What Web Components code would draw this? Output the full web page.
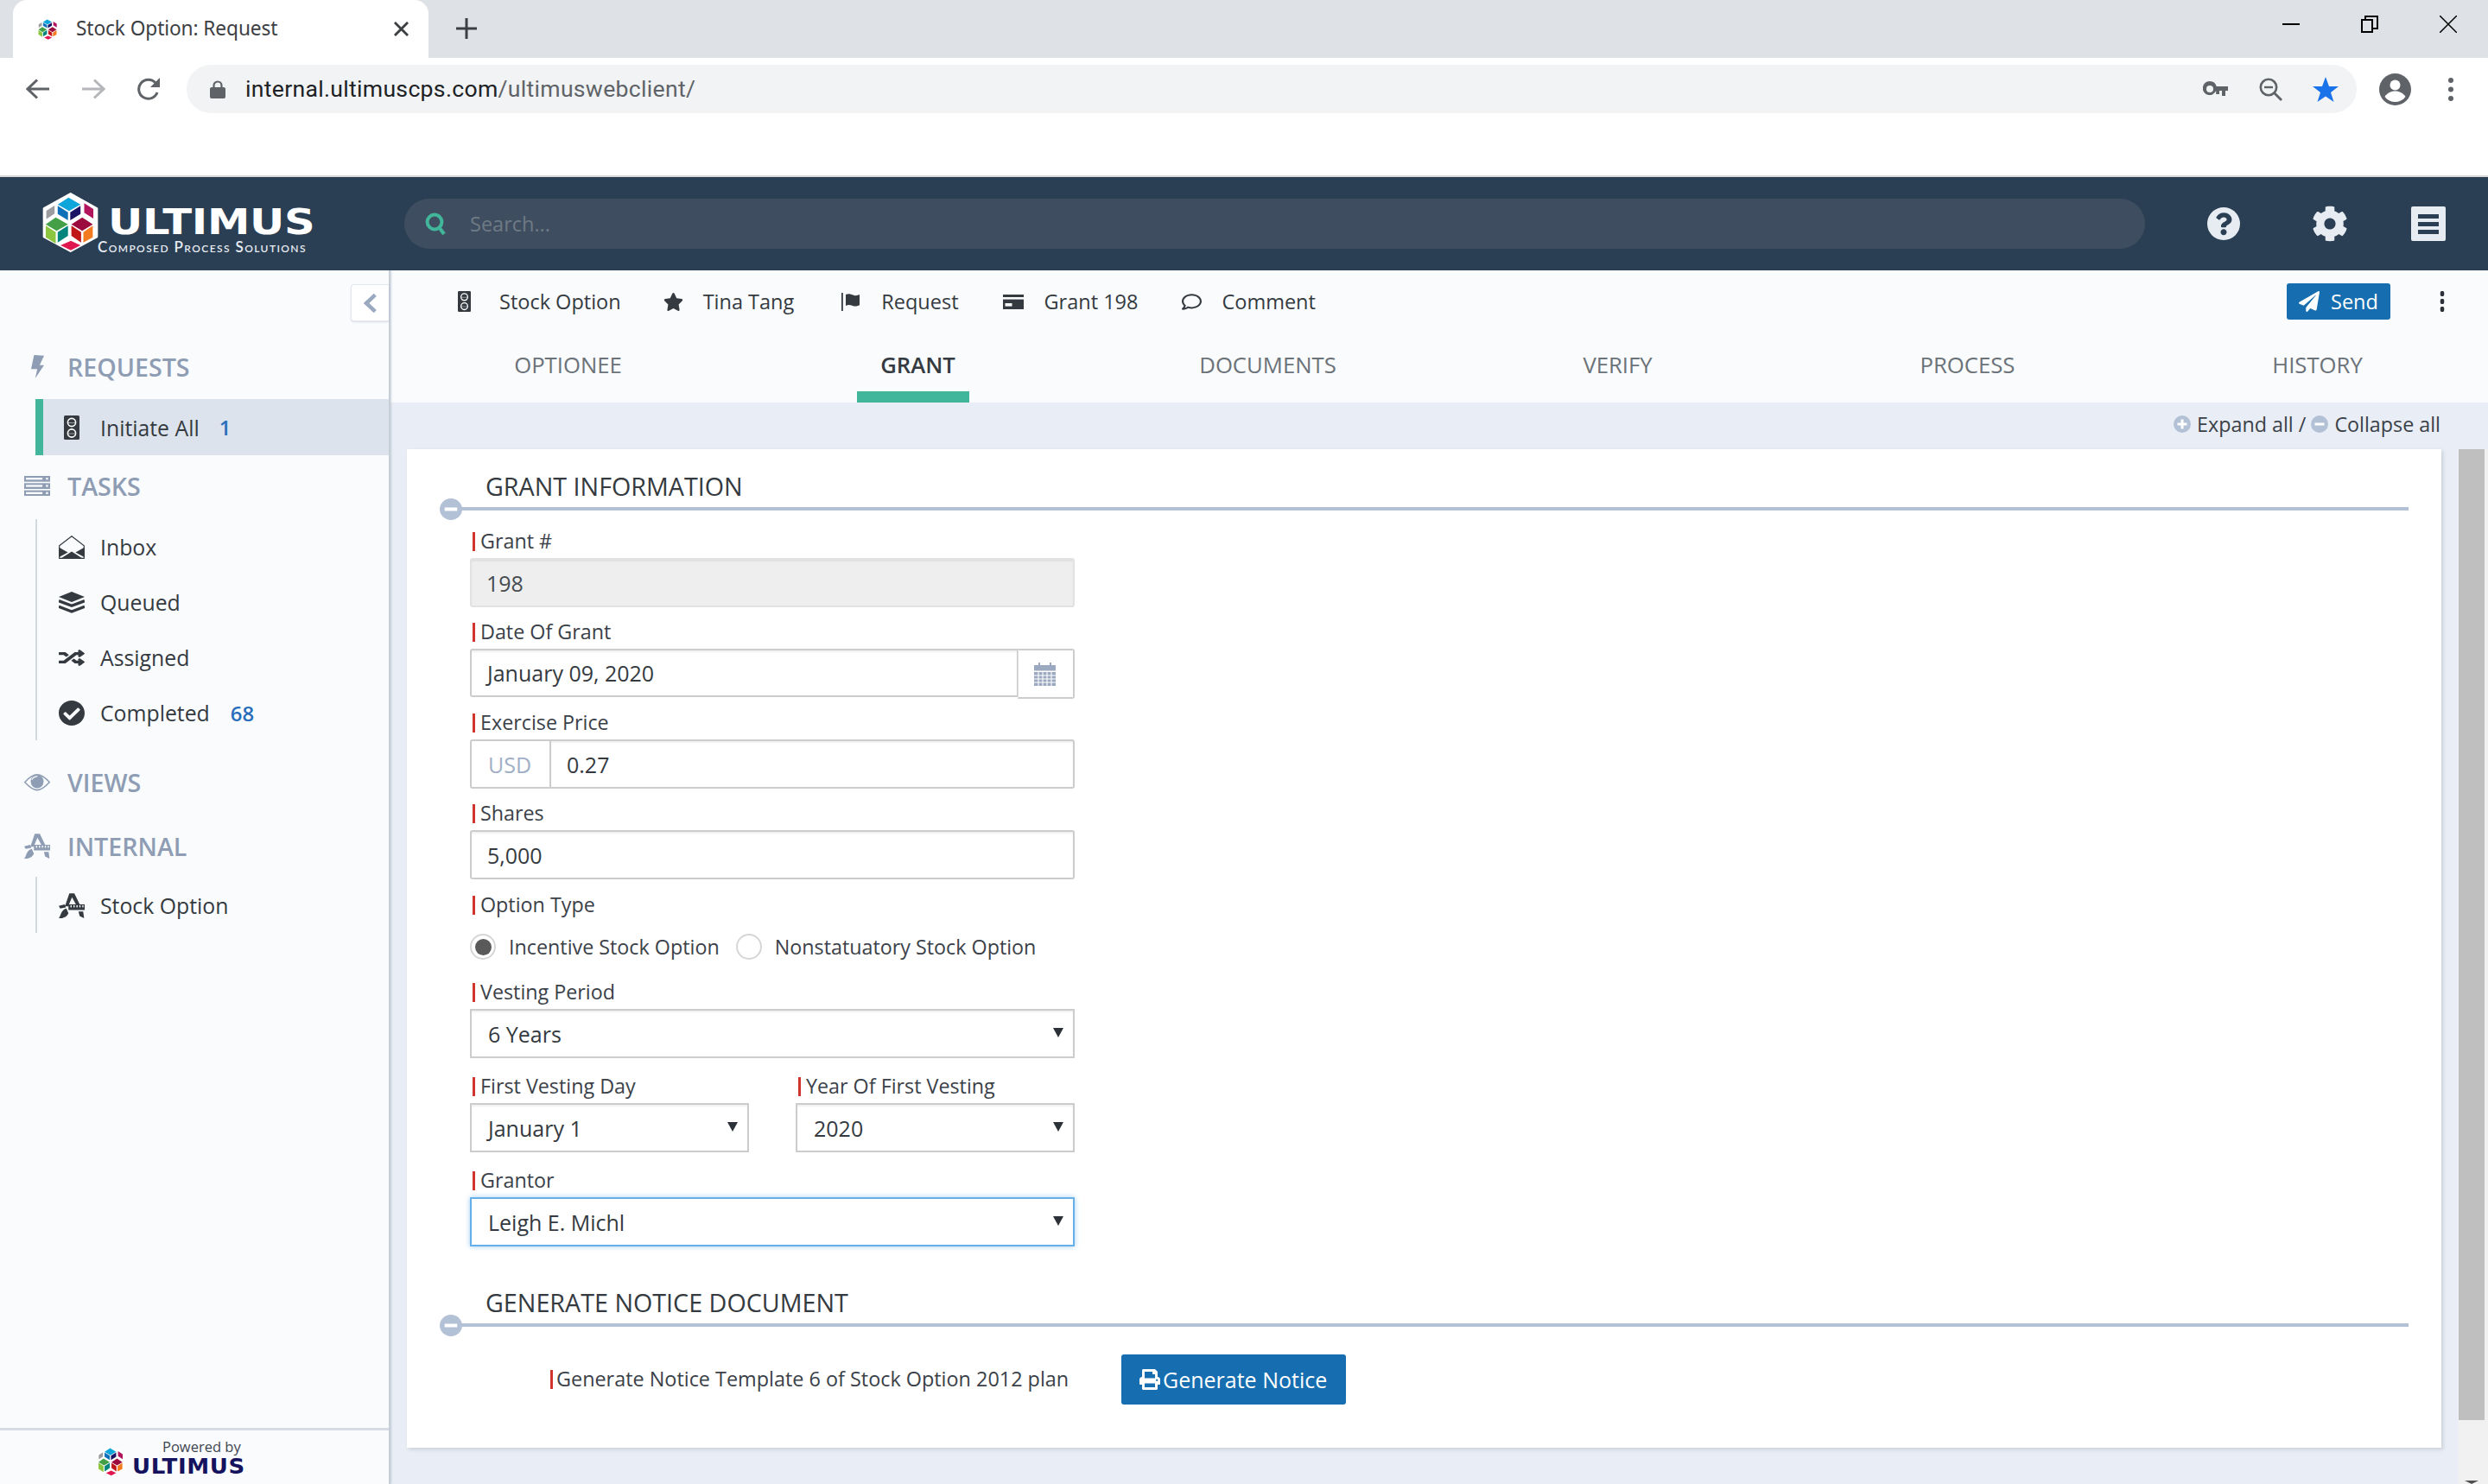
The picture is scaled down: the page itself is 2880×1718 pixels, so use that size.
<!DOCTYPE html>
<html lang="en">
<head>
<meta charset="utf-8">
<title>Stock Option: Request</title>
<style>
html,body{margin:0;padding:0;width:2880px;height:1718px;overflow:hidden;background:#fff}
body{font-family:"Open Sans","Noto Sans",sans-serif;font-size:25px;color:#343a40}
</style>
</head>
<body>
<app-root></app-root>
<script>
const ICONS={
 traffic:['0 0 18 28','<rect width="18" height="28" rx="1.5" fill="currentColor"/><circle cx="9" cy="8" r="4.6" fill="none" stroke="#fff" stroke-width="1.6"/><circle cx="9" cy="20.5" r="4.6" fill="none" stroke="#fff" stroke-width="1.6"/><path d="M5 8.5h8M5 21h8" stroke="#fff" stroke-width="1" opacity=".5"/>'],
 bolt:['108 310 44 80','<polygon fill="currentColor" points="118,310 152,312 137,345 152,345 122,390 129,358 108,358"/>'],
 server:['86 723 88 69','<g fill="currentColor"><rect x="86" y="723" width="88" height="20"/><rect x="86" y="748" width="88" height="20"/><rect x="86" y="773" width="88" height="19"/></g><g fill="#f9fbfd"><rect x="92" y="729" width="56" height="7"/><rect x="92" y="754" width="56" height="7"/><rect x="92" y="779" width="56" height="7"/><rect x="160" y="729" width="7" height="7"/><rect x="160" y="754" width="7" height="7"/><rect x="160" y="779" width="7" height="7"/></g>'],
 inbox:['205 932 88 80','<path d="M207 967 249 934 291 967V1010H207Z" fill="none" stroke="currentColor" stroke-width="3.4"/><path fill="currentColor" d="M205 972 236 990 205 1007ZM293 972 262 990 293 1007ZM210 1012 249 987 288 1012Z"/>'],
 layers:['205 1125 88 75','<path fill="currentColor" d="M249 1125 293 1143 249 1161 205 1143Z"/><path fill="none" stroke="currentColor" stroke-width="10" d="M205 1157 249 1174 293 1157M205 1177 249 1194 293 1177"/>'],
 random:['0 0 512 512','<path fill="currentColor" d="M504.971 359.029c9.373 9.373 9.373 24.569 0 33.941l-80 79.984c-15.01 15.01-40.971 4.49-40.971-16.971V416h-58.785a12.004 12.004 0 0 1-8.773-3.812l-70.556-75.596 53.333-57.143L352 336h32v-39.981c0-21.438 25.943-31.998 40.971-16.971l80 79.981zM12 176h84l52.781 56.551 53.333-57.143-70.556-75.596A11.999 11.999 0 0 0 122.785 96H12c-6.627 0-12 5.373-12 12v56c0 6.627 5.373 12 12 12zm372 0v39.984c0 21.46 25.961 31.98 40.971 16.971l80-79.984c9.373-9.373 9.373-24.569 0-33.941l-80-79.981C409.943 24.021 384 34.582 384 56.019V96h-58.785a12.004 12.004 0 0 0-8.773 3.812L96 336H12c-6.627 0-12 5.373-12 12v56c0 6.627 5.373 12 12 12h110.785c3.326 0 6.503-1.381 8.773-3.812L352 176h32z"/>'],
 check:['8 8 496 496','<path fill="currentColor" d="M504 256c0 136.967-111.033 248-248 248S8 392.967 8 256 119.033 8 256 8s248 111.033 248 248zM227.314 387.314l184-184c6.248-6.248 6.248-16.379 0-22.627l-22.627-22.627c-6.248-6.249-16.379-6.249-22.628 0L216 308.118l-70.059-70.059c-6.248-6.248-16.379-6.248-22.628 0l-22.627 22.627c-6.248 6.248-6.248 16.379 0 22.627l104 104c6.249 6.249 16.379 6.249 22.628.001z"/>'],
 eye:['86 290 88 60','<path d="M88 320C105 302 118 295 130 295S155 302 172 320C155 338 142 346 130 346S105 338 88 320Z" fill="none" stroke="currentColor" stroke-width="4.5"/><circle cx="130" cy="318" r="22" fill="currentColor"/><path d="M112 312C116 304 124 301 131 301" stroke="#f9fbfd" stroke-width="3" fill="none"/>'],
 design:['205 700 88 85','<path fill="currentColor" d="M241 701H258L283 752H271L250 714 237 745H226ZM238 738H293V757H238ZM205 743 225 738 229 748 210 752ZM231 752 238 768C232 782 218 786 205 785 213 776 212 757 231 752ZM272 762H288L291 785 276 778Z"/><g fill="#f9fbfd"><rect x="245" y="741" width="4" height="7"/><rect x="255" y="741" width="4" height="7"/><rect x="265" y="741" width="4" height="7"/><rect x="275" y="741" width="4" height="7"/><rect x="285" y="741" width="4" height="7"/></g>'],
 chevron:['1265 88 44 64','<path d="M1304 92 1274 120 1304 148" fill="none" stroke="currentColor" stroke-width="13"/>'],
 star:['0 0 576 512','<path fill="currentColor" d="M259.3 17.8L194 150.2 47.9 171.5c-26.2 3.8-36.7 36.1-17.7 54.6l105.7 103-25 145.5c-4.5 26.3 23.2 46 46.4 33.7L288 439.6l130.7 68.7c23.2 12.2 50.9-7.4 46.4-33.7l-25-145.5 105.7-103c19-18.5 8.5-50.8-17.7-54.6L382 150.2 316.7 17.8c-11.7-23.6-45.6-23.9-57.4 0z"/>'],
 flag:['0 0 21 21','<rect width="1.8" height="21" fill="currentColor"/><path fill="currentColor" d="M5 2C9 0 12 2 15 3c2 .5 4 0 6-1v12c-2 1.5-5 2-8 1s-5-1.5-8 0Z"/>'],
 card:['0 0 24 17','<rect width="24" height="17" fill="currentColor"/><rect y="3" width="24" height="2.6" fill="#f9fbfd"/><rect x="2.5" y="10" width="8" height="3.6" fill="#f9fbfd"/>'],
 comment:['0 0 512 512','<path fill="currentColor" d="M256 32C114.6 32 0 125.1 0 240c0 47.6 19.9 91.2 52.9 126.3C38 405.7 7 439.1 6.5 439.5c-6.6 7-8.4 17.2-4.6 26S14.4 480 24 480c61.5 0 110-25.7 139.1-46.3C192 442.8 223.2 448 256 448c141.4 0 256-93.1 256-208S397.4 32 256 32zm0 368c-26.7 0-53.1-4.1-78.4-12.1l-22.7-7.2-19.5 13.8c-14.3 10.1-33.9 21.4-57.5 29 7.3-12.1 14.4-25.7 19.9-40.2l10.6-28.1-20.6-21.8C69.7 314.1 48 282.2 48 240c0-88.2 93.3-160 208-160s208 71.8 208 160-93.3 160-208 160z"/>'],
 plane:['0 0 512 512','<path fill="currentColor" d="M476 3.2L12.5 270.6c-18.1 10.4-15.8 35.6 2.2 43.2L121 358.4l287.3-253.2c5.5-4.9 13.3 2.6 8.6 8.3L176 407v80.5c0 23.6 28.5 32.9 42.5 15.8L282 426l124.6 52.2c14.2 6 30.4-2.9 33-18.2l72-432C515 7.8 493.3-6.8 476 3.2z"/>'],
 kebab:['0 0 8 24','<rect x="1" y="0" width="6" height="6" rx="2" fill="currentColor"/><rect x="1" y="9" width="6" height="6" rx="2" fill="currentColor"/><rect x="1" y="18" width="6" height="6" rx="2" fill="currentColor"/>'],
 cog:['0 0 512 512','<path fill="currentColor" d="M487.4 315.7l-42.6-24.6c4.3-23.2 4.3-47 0-70.2l42.6-24.6c4.9-2.8 7.1-8.6 5.5-14-11.1-35.6-30-67.8-54.7-94.6-3.8-4.1-10-5.1-14.8-2.3L380.8 110c-17.9-15.4-38.5-27.3-60.8-35.1V25.8c0-5.6-3.9-10.5-9.4-11.7-36.7-8.2-74.3-7.8-109.2 0-5.5 1.2-9.4 6.1-9.4 11.7V75c-22.2 7.9-42.8 19.8-60.8 35.1L88.7 85.5c-4.9-2.8-11-1.9-14.8 2.3-24.7 26.7-43.6 58.9-54.7 94.6-1.7 5.4.6 11.2 5.5 14L67.3 221c-4.3 23.2-4.3 47 0 70.2l-42.6 24.6c-4.9 2.8-7.1 8.6-5.5 14 11.1 35.6 30 67.8 54.7 94.6 3.8 4.1 10 5.1 14.8 2.3l42.6-24.6c17.9 15.4 38.5 27.3 60.8 35.1v49.2c0 5.6 3.9 10.5 9.4 11.7 36.7 8.2 74.3 7.8 109.2 0 5.5-1.2 9.4-6.1 9.4-11.7v-49.2c22.2-7.9 42.8-19.8 60.8-35.1l42.6 24.6c4.9 2.8 11 1.9 14.8-2.3 24.7-26.7 43.6-58.9 54.7-94.6 1.5-5.5-.7-11.3-5.6-14.1zM256 336c-44.1 0-80-35.9-80-80s35.9-80 80-80 80 35.9 80 80-35.9 80-80 80z"/>'],
 help:['8 8 496 496','<path fill="currentColor" d="M504 256c0 136.997-111.043 248-248 248S8 392.997 8 256C8 119.083 119.043 8 256 8s248 111.083 248 248zM262.655 90c-54.497 0-89.255 22.957-116.549 63.758-3.536 5.286-2.353 12.415 2.715 16.258l34.699 26.31c5.205 3.947 12.621 3.008 16.665-2.122 17.864-22.658 30.113-35.797 57.303-35.797 20.429 0 45.698 13.148 45.698 32.958 0 14.976-12.363 22.667-32.534 33.976C247.128 238.528 216 254.941 216 296v4c0 6.627 5.373 12 12 12h56c6.627 0 12-5.373 12-12v-1.333c0-28.462 83.186-29.647 83.186-106.667 0-58.002-60.165-102-116.531-102zM256 338c-25.365 0-46 20.635-46 46 0 25.364 20.635 46 46 46s46-20.636 46-46c0-25.365-20.635-46-46-46z"/>'],
 menu:['0 0 40 40','<rect width="40" height="40" rx="2" fill="currentColor"/><rect x="8" y="9" width="24" height="5" fill="#2b3f54"/><rect x="8" y="18" width="24" height="5" fill="#2b3f54"/><rect x="8" y="27" width="24" height="5" fill="#2b3f54"/>'],
 search:['0 0 24 26','<circle cx="11" cy="11" r="8.4" fill="none" stroke="currentColor" stroke-width="4"/><path d="M16.5 17.5 22 25" stroke="currentColor" stroke-width="4.2"/>'],
 calendar:['0 0 25 27','<g fill="currentColor"><rect y="3" width="25" height="6.5"/><rect x="5" y="0" width="2" height="4"/><rect x="18" y="0" width="2" height="4"/><rect y="11" width="25" height="16"/></g><g stroke="#fff" stroke-width="1.1"><path d="M5 11v16M10 11v16M15 11v16M20 11v16M0 15h25M0 19h25M0 23h25"/></g>'],
 print:['0 0 512 512','<path fill="currentColor" d="M448 192V77.25c0-8.49-3.37-16.62-9.37-22.63L393.37 9.37c-6-6-14.14-9.37-22.63-9.37H96C78.33 0 64 14.33 64 32v160c-35.35 0-64 28.65-64 64v112c0 8.84 7.16 16 16 16h48v96c0 17.67 14.33 32 32 32h320c17.67 0 32-14.33 32-32v-96h48c8.84 0 16-7.16 16-16V256c0-35.35-28.65-64-64-64zm-64 256H128v-96h256v96zm0-224H128V64h192v48c0 8.84 7.16 16 16 16h48v96zm48 72c-13.25 0-24-10.75-24-24 0-13.26 10.75-24 24-24s24 10.74 24 24c0 13.25-10.75 24-24 24z"/>'],
 back:['0 0 27 24','<path d="M27 12H3M13 1.5 2 12l11 10.5" fill="none" stroke="currentColor" stroke-width="3"/>'],
 forward:['0 0 27 24','<path d="M0 12h24M14 1.5 25 12 14 22.5" fill="none" stroke="currentColor" stroke-width="3"/>'],
 reload:['0 0 27 26','<path d="M23 17a11 11 0 1 1-2-11" fill="none" stroke="currentColor" stroke-width="3"/><polygon points="26,0 26,11 15,11" fill="currentColor"/>'],
 lock:['0 0 18 21','<path d="M4.5 9V6a4.5 4.5 0 0 1 9 0v3" fill="none" stroke="currentColor" stroke-width="2.2"/><rect y="8" width="18" height="13" rx="2" fill="currentColor"/>'],
 key:['0 0 29 18','<path fill="currentColor" fill-rule="evenodd" d="M8 0a8 8 0 0 1 7.7 6H29v5h-3v6h-4v-6h-3v4h-3.8V11A8 8 0 1 1 8 0Zm0 5a4 4 0 1 0 0 8 4 4 0 0 0 0-8Z"/>'],
 zoomout:['0 0 27 27','<circle cx="11" cy="11" r="9.2" fill="none" stroke="currentColor" stroke-width="2.6"/><path d="M17.5 17.5 26 26" stroke="currentColor" stroke-width="2.8"/><path d="M6 11h10" stroke="currentColor" stroke-width="2.4"/>'],
 bookmark:['0 0 30 29','<polygon fill="currentColor" points="15,0 19,11 30,11 21,18 24.5,29 15,22.5 5.5,29 9,18 0,11 11,11"/>'],
 profile:['0 0 37 37','<circle cx="18.5" cy="18.5" r="18.5" fill="currentColor"/><circle cx="18.5" cy="13.5" r="6" fill="#fff"/><path fill="#fff" d="M6.5 27c3-5 8-6.5 12-6.5s9 1.500 12 6.500c-3 4-7.500 6-12 6s-9-2-12-6Z"/>'],
 vdots:['0 0 6 27','<circle cx="3" cy="3" r="3" fill="currentColor"/><circle cx="3" cy="13.500" r="3" fill="currentColor"/><circle cx="3" cy="24" r="3" fill="currentColor"/>'],
 close:['0 0 18 18','<path d="M1 1 17 17M17 1 1 17" stroke="currentColor" stroke-width="3"/>'],
 plus:['0 0 24 24','<path d="M12 0v24M0 12h24" stroke="currentColor" stroke-width="3"/>'],
 winclose:['0 0 20 20','<path d="M0 0 20 20M20 0 0 20" stroke="currentColor" stroke-width="1.500"/>'],
 winmin:['0 0 20 2','<rect width="20" height="2" fill="currentColor"/>'],
 winmax:['0 0 20 20','<path d="M1 5h12v14H1ZM5 5V1h14v14h-6" fill="none" stroke="currentColor" stroke-width="2"/>'],
 minus:['0 0 25 25','<circle cx="12.500" cy="12.500" r="12.500" fill="currentColor"/><rect x="5.500" y="10.500" width="14" height="4" fill="#fff"/>'],
 plusc:['0 0 20 20','<circle cx="10" cy="10" r="10" fill="currentColor"/><path d="M4.500 10h11M10 4.500v11" stroke="#fff" stroke-width="3"/>'],
 minusc:['0 0 20 20','<circle cx="10" cy="10" r="10" fill="currentColor"/><path d="M4.500 10h11" stroke="#fff" stroke-width="3"/>'],
 caret:['0 0 12 11','<polygon points="0,0 12,0 6,11" fill="currentColor"/>']
};
const CUBE=`<path fill="#fff" stroke="#fff" stroke-width="8" stroke-linejoin="round" d="M187 59 279 110V208L187 258 94 208V110Z"/>
<path fill="#0ea5db" d="M142 96 180 72 222 96 182 119Z"/><path fill="#0d6fb8" d="M142 101 178 123V151L142 129Z"/><path fill="#1b1464" d="M186 123 222 101V129L186 151Z"/>
<path fill="#9a9ca0" d="M102 118 131 100V128L102 147Z"/><path fill="#b0155e" d="M235 92 267 112V145L235 125Z"/>
<path fill="#43a047" d="M100 165 135 141 178 165 138 188Z"/><path fill="#8cc63f" d="M100 170 135 192V232L100 210Z"/><path fill="#00857c" d="M142 192 178 170V205L142 228Z"/>
<path fill="#9b0b3e" d="M190 165 228 141 265 165 228 188Z"/><path fill="#c01818" d="M190 170 224 192V228L190 205Z"/><path fill="#f47a1f" d="M232 192 265 170V210L232 228Z"/>
<path fill="#e0174f" d="M152 238 188 222 222 238 188 255Z"/>`;
function def(name,fn){customElements.define(name,class extends HTMLElement{
  connectedCallback(){if(this.shadowRoot)return;const r=this.attachShadow({mode:'open'});r.innerHTML=fn(this)}
})}
const a=(el,n,d='')=>el.getAttribute(n)??d;

def('x-icon',el=>{const [vb,body]=ICONS[a(el,'name')];return `<style>:host{display:inline-flex;flex:none;width:${a(el,'w','24')}px;height:${a(el,'h','24')}px;color:${a(el,'c','inherit')}}svg{display:block;width:100%;height:100%}</style><svg viewBox="${vb}" preserveAspectRatio="none" aria-hidden="true">${body}</svg>`});
def('ultimus-cube',el=>`<style>:host{display:block;flex:none;width:${a(el,'w')}px;height:${a(el,'h')}px}svg{display:block;width:100%;height:100%}</style><svg viewBox="88 52 197 213" preserveAspectRatio="none" aria-hidden="true">${CUBE}</svg>`);

def('browser-chrome',()=>`<style>
:host{display:block;height:205px;background:#fff;box-sizing:border-box;position:relative;font-family:"Noto Sans","Open Sans",sans-serif}
.strip{height:67px;background:#dee1e6;display:flex;align-items:center;color:#3c4043}
.tab{margin-left:15px;width:481px;height:67px;box-sizing:border-box;background:#fff;border-radius:16px 16px 0 0;display:flex;align-items:center;padding-left:28px}
.tab .t{margin-left:20px;flex:1;font-size:22.7px;color:#3c4043;letter-spacing:-.1px;white-space:nowrap;margin-top:-2px}
.tab x-icon{margin-right:23px}
.new{margin-left:32px;margin-top:-2px}
.win{margin-left:auto;display:flex;align-items:center;color:#000;margin-right:36px;height:46px;margin-top:-12px}
.win x-icon+x-icon{margin-left:71px}
.bar{display:flex;align-items:center;height:56px;margin-top:8px;color:#5f6368}
.bar>x-icon:nth-child(1){margin-left:30px}
.bar>x-icon:nth-child(2){margin-left:38px}
.bar>x-icon:nth-child(3){margin-left:37px}
.omni{margin-left:30px;width:2512px;height:56px;border-radius:28px;background:#f1f3f4;display:flex;align-items:center;box-sizing:border-box;padding-left:27px}
.url{margin-left:23px;font:26.6px/1 Roboto,sans-serif;color:#202124;letter-spacing:.3px}.url span{color:#5f6368}
.r{margin-left:auto;display:flex;align-items:center}
.line{position:absolute;left:0;right:0;bottom:0;height:2px;background:#d8d8d8}
</style>
<div class="strip"><div class="tab"><ultimus-cube w="25" h="27"></ultimus-cube><span class="t">Stock Option: Request</span><x-icon name="close" w="17" h="17"></x-icon></div>
<x-icon class="new" name="plus" w="24" h="24"></x-icon>
<div class="win"><x-icon name="winmin" w="20" h="2"></x-icon><x-icon name="winmax" w="20" h="20"></x-icon><x-icon name="winclose" w="20" h="20"></x-icon></div></div>
<div class="bar"><x-icon name="back" w="27" h="24"></x-icon><x-icon name="forward" w="27" h="24" c="#b4b6b9"></x-icon><x-icon name="reload" w="27" h="26"></x-icon>
<div class="omni"><x-icon name="lock" w="18" h="21"></x-icon><div class="url">internal.ultimuscps.com<span>/ultimuswebclient/</span></div>
<div class="r"><x-icon name="key" w="29" h="18"></x-icon><x-icon style="margin-left:36px" name="zoomout" w="27" h="27"></x-icon><x-icon style="margin-left:35px" name="bookmark" w="30" h="29" c="#1a73e8"></x-icon><span style="width:21px"></span></div></div>
<x-icon style="margin-left:26px" name="profile" w="37" h="37"></x-icon><x-icon style="margin-left:43px" name="vdots" w="6" h="27"></x-icon></div>
<div class="line"></div>`);

def('brand-logo',()=>`<style>
:host{display:flex;align-items:center;width:340px;margin-left:49px}
ultimus-cube{margin-top:-3px}
.w{margin-left:10px;display:flex;flex-direction:column;color:#fff;margin-top:16px}
.n{font:700 40px/31px "DejaVu Sans",sans-serif;display:block;transform:scaleX(1.24);transform-origin:left center;margin-left:1px;white-space:nowrap;letter-spacing:-.2px}
.s{font:600 17px/14px Lato,"Open Sans",sans-serif;font-variant:small-caps;letter-spacing:1.4px;margin-top:6px;margin-left:-11px;white-space:nowrap;color:#e6ecf2}
</style><ultimus-cube w="65" h="71"></ultimus-cube><div class="w"><span class="n">ULTIMUS</span><span class="s">Composed Process Solutions</span></div>`);

def('app-header',()=>`<style>
:host{display:flex;align-items:center;height:108px;background:#2b3f54}
.search{margin-left:79px;width:2015px;height:58px;border-radius:29px;background:#3e4d5f;display:flex;align-items:center;box-sizing:border-box;padding-left:24px}
.search span{margin-left:28px;color:#6f7a85;font-size:23.5px}
</style><brand-logo></brand-logo>
<div class="search"><x-icon name="search" w="24" h="26" c="#41b69b"></x-icon><span>Search...</span></div>
<x-icon style="margin-left:72px" name="help" w="38" h="38" c="#e6ecf2"></x-icon><x-icon style="margin-left:83px" name="cog" w="42" h="42" c="#e6ecf2"></x-icon><x-icon style="margin-left:73px" name="menu" w="40" h="40" c="#e6ecf2"></x-icon>`);

def('nav-head',el=>`<style>
:host{display:flex;align-items:center;height:50px;margin-top:${a(el,'mt','0')}px;color:#8e9db3;font-size:28.6px;font-weight:600}
.i{width:78px;flex:none;display:flex;box-sizing:border-box;padding-left:${a(el,'pl','28')}px}
</style><span class="i"><x-icon name="${a(el,'icon')}" w="${a(el,'w')}" h="${a(el,'h')}"></x-icon></span><slot></slot>`);

def('nav-item',el=>{const act=el.hasAttribute('active');return `<style>
:host{display:flex;align-items:center;height:${a(el,'ht','64')}px;box-sizing:border-box;color:#343a40;font-size:24.8px;${act?'background:#dce3ed;border-left:9px solid #41b69b;height:65px;':''}}
.i{width:${act?66:73}px;flex:none;display:flex;box-sizing:border-box;padding-left:${act?24:25}px}
.b{color:#2a6ebb;font-weight:600;font-size:23.9px;margin-left:${a(el,'bg','24')}px}
</style><span class="i"><x-icon name="${a(el,'icon')}" w="${a(el,'w')}" h="${a(el,'h')}"></x-icon></span><slot></slot>${a(el,'badge')?`<span class="b">${a(el,'badge')}</span>`:''}`});

def('nav-list',el=>`<style>:host{display:block;margin:${a(el,'mt','0')}px 0 0 41px;border-left:2px solid #d3d8dd}</style><slot></slot>`);

def('side-nav',()=>`<style>
:host{display:flex;flex-direction:column;flex:none;width:452px;box-sizing:border-box;background:#f9fbfd;border-right:2px solid #c6ced8;box-shadow:1px 0 2px rgba(90,110,140,.25);position:relative;z-index:2}
.top{display:flex;justify-content:flex-end;height:43px;margin-top:16px;margin-bottom:27px}
.col{width:44px;height:43px;box-sizing:border-box;background:#fff;border:1px solid #e4e8ee;border-right:0;border-radius:4px 0 0 4px;box-shadow:0 1px 2px rgba(90,110,140,.2);display:flex;align-items:center;justify-content:center;color:#9aa8c0}
.foot{margin-top:auto;height:65px;box-sizing:border-box;border-top:3px solid #d5dce5;display:flex;padding-left:112px;padding-top:17px;position:relative}
.pw{position:absolute;left:188px;top:8px;font-size:16.5px;line-height:22px;color:#3e4650}
.un{font:700 25px/26px "DejaVu Sans",sans-serif;color:#15125e;margin:12px 0 0 8px;letter-spacing:.6px;transform:scaleX(1.04);transform-origin:left center}
</style>
<div class="top"><div class="col"><x-icon name="chevron" w="15" h="22"></x-icon></div></div>
<nav-head icon="bolt" w="15" h="27" pl="36">REQUESTS</nav-head>
<nav-item style="margin:13px 0 0 41px" active icon="traffic" w="18" h="28" badge="1" bg="23">Initiate All</nav-item>
<nav-head mt="10" icon="server" w="30" h="23">TASKS</nav-head>
<nav-list mt="14"><nav-item icon="inbox" w="30" h="27">Inbox</nav-item><nav-item icon="layers" w="30" h="25">Queued</nav-item><nav-item icon="random" w="30" h="21">Assigned</nav-item><nav-item icon="check" w="30" h="29" badge="68">Completed</nav-item></nav-list>
<nav-head mt="23" icon="eye" w="30" h="21">VIEWS</nav-head>
<nav-head mt="24" icon="design" w="30" h="29">INTERNAL</nav-head>
<nav-list mt="11"><nav-item style="padding-top:1px" ht="65" icon="design" w="30" h="29">Stock Option</nav-item></nav-list>
<div class="foot"><ultimus-cube w="33" h="37"></ultimus-cube><span class="un">ULTIMUS</span><span class="pw">Powered by</span></div>`);

def('crumb-item',el=>`<style>:host{display:inline-flex;align-items:center;font-size:23.5px;color:#343a40}span{display:inline-flex;width:${a(el,'iw','48')}px;flex:none}</style><span><x-icon name="${a(el,'icon')}" w="${a(el,'w')}" h="${a(el,'h')}"></x-icon></span><slot></slot>`);

def('top-bar',()=>`<style>
:host{display:flex;align-items:center;height:79px;background:#f9fbfd;box-sizing:border-box;padding-bottom:7px}
.send{display:flex;align-items:center;margin-left:auto;width:120px;height:42px;box-sizing:border-box;padding-left:14px;border-radius:3px;background:#166eb0;color:#fff;font-size:23.5px}
.send span{margin-left:13px}
.k{margin:0 50px 0 57px;color:#2b3137}
</style>
<crumb-item style="margin-left:78px" icon="traffic" w="15" h="24" iw="48">Stock Option</crumb-item>
<crumb-item style="margin-left:49px" icon="star" w="23" h="21" iw="46">Tina Tang</crumb-item>
<crumb-item style="margin-left:55px" icon="flag" w="21" h="21" iw="46">Request</crumb-item>
<crumb-item style="margin-left:51px" icon="card" w="24" h="17" iw="48">Grant 198</crumb-item>
<crumb-item style="margin-left:51px" icon="comment" w="23" h="21" iw="46">Comment</crumb-item>
<div class="send"><x-icon name="plane" w="24" h="24"></x-icon><span>Send</span></div>
<x-icon class="k" name="kebab" w="6" h="24"></x-icon>`);

def('tab-bar',()=>`<style>
:host{display:grid;grid-template-columns:repeat(6,405px);height:74px;background:#f9fbfd;padding-left:3px;font-size:25.7px;font-weight:500;color:#6b7278}
div{display:flex;justify-content:center;align-items:flex-start;padding-top:13px;line-height:36px;position:relative}
.on{color:#343a40;font-weight:600}
.on::after{content:"";position:absolute;left:132px;top:61px;width:130px;height:13px;background:#41b69b}
</style><div>OPTIONEE</div><div class="on">GRANT</div><div>DOCUMENTS</div><div>VERIFY</div><div>PROCESS</div><div>HISTORY</div>`);

def('form-section',el=>`<style>
:host{display:block;margin-top:${a(el,'mt','0')}px}
.h{margin:0 38px 0 63px;font-size:28.7px;line-height:38px;padding-left:28px;color:#343a40;padding-bottom:5px;border-bottom:4px solid #b3c1d6;position:relative}
.h x-icon{position:absolute;left:-25px;bottom:-15px}
.b{margin-left:73px;width:700px}
</style><div class="h">${a(el,'title')}<x-icon name="minus" w="26" h="25" c="#b3c1d6"></x-icon></div><div class="b"><slot></slot></div><slot name="wide"></slot>`);

def('req-label',el=>`<style>:host{display:flex;align-items:center;height:22px;margin-left:3px;font-size:${a(el,'fs','23.3')}px;color:#3b4148;white-space:nowrap}i{width:3px;height:22px;background:#d0342c;margin-right:${a(el,'g','6')}px;flex:none}span{margin-top:-3px}</style><i></i><span><slot></slot></span>`);

def('text-box',el=>{const s=a(el,'kind','text');return `<style>
:host{display:flex;align-items:center;box-sizing:border-box;height:57px;margin-top:8px;border:2px solid #ccc;border-radius:3px;box-shadow:inset 0 2px 2px rgba(0,0,0,.06);background:${s==='readonly'?'#eee':'#fff'};padding-left:${a(el,'pl','18')}px;font-size:25px;color:#343a40;${s==='readonly'?'border-color:#e2e2e2;color:#454b51':''}}
</style><slot></slot>`});

def('date-box',()=>`<style>
:host{display:flex;margin-top:8px;height:58px}
.i{flex:1;display:flex;align-items:center;box-sizing:border-box;height:56px;border:2px solid #ccc;border-radius:3px 0 0 3px;border-right:1px solid #ccc;padding-left:18px;font-size:25px;box-shadow:inset 0 2px 2px rgba(0,0,0,.06)}
.b{width:66px;box-sizing:border-box;border:2px solid #ccc;border-left:1px solid #ddd;border-radius:0 3px 3px 0;display:flex;align-items:center;justify-content:center;color:#9aa8c0;padding-right:2px}
</style><div class="i"><slot></slot></div><div class="b"><x-icon name="calendar" w="25" h="27"></x-icon></div>`);

def('money-box',el=>`<style>
:host{display:flex;margin-top:8px;height:57px}
.u{width:92px;box-sizing:border-box;border:2px solid #ccc;border-right:0;border-radius:3px 0 0 3px;display:flex;align-items:center;justify-content:center;color:#9fafc6;font-size:25px;padding-right:2px}
.i{flex:1;display:flex;align-items:center;box-sizing:border-box;border:2px solid #ccc;border-radius:0 3px 3px 0;padding-left:18px;font-size:25px;box-shadow:inset 0 2px 2px rgba(0,0,0,.06)}
</style><div class="u">${a(el,'unit')}</div><div class="i"><slot></slot></div>`);

def('select-box',el=>`<style>
:host{display:flex;align-items:center;box-sizing:border-box;height:57px;margin-top:8px;border:2px solid ${el.hasAttribute('focus')?'#66afe9':'#ccc'};padding-left:19px;padding-right:11px;font-size:25px;color:#343a40;background:#fff;${el.hasAttribute('focus')?'box-shadow:0 0 6px rgba(102,175,233,.6);':'box-shadow:inset 0 2px 2px rgba(0,0,0,.06);'}}
x-icon{margin-left:auto;margin-top:-3px;color:#2b3137}
</style><slot></slot><x-icon name="caret" w="12" h="11"></x-icon>`);

def('radio-opt',el=>`<style>
:host{display:inline-flex;align-items:center;font-size:23.3px;color:#3b4148;white-space:nowrap}
i{width:30px;height:30px;box-sizing:border-box;border-radius:50%;border:2px solid #d6d6d6;background:#fff;margin-right:15px;display:flex;align-items:center;justify-content:center;flex:none}
b{width:19px;height:19px;border-radius:50%;background:#5a5a5a;display:${el.hasAttribute('checked')?'block':'none'}}
</style><i><b></b></i><slot></slot>`);

def('gen-row',()=>`<style>
:host{display:grid;grid-template-columns:661px auto;margin:32px 0 0 166px;align-items:center}
.btn{display:flex;align-items:center;width:260px;height:58px;box-sizing:border-box;padding-left:21px;border-radius:3px;background:#166eb0;color:#fff;font-size:25px;white-space:nowrap}
.btn x-icon{margin-right:3px}
</style><req-label fs="23.4" g="4" style="margin:0"><slot></slot></req-label><div class="btn"><x-icon name="print" w="24" h="24"></x-icon>Generate Notice</div>`);

def('expand-row',()=>`<style>
:host{display:flex;align-items:center;justify-content:flex-end;height:54px;background:#e9edf5;padding-right:55px;padding-bottom:5px;font-size:23.3px;color:#3b4148;box-sizing:border-box}
x-icon{margin:0 7px 0 0;color:#b3c1d6}
</style><x-icon name="plusc" w="20" h="20"></x-icon><span>Expand all /&nbsp;</span><x-icon name="minusc" w="20" h="20"></x-icon><span>Collapse all</span>`);

def('scroll-rail',()=>`<style>
:host{display:block;flex:none;width:35px;background:#f1f1f1;position:relative}
.t{margin-left:1px;width:30px;height:1124px;background:#bfbfbf}
x-icon{position:absolute;left:8px;bottom:0;color:#505050}
</style><div class="t"></div><x-icon name="caret" w="16" h="4"></x-icon>`);

def('grant-form',()=>`<style>
:host{display:block;box-sizing:border-box;width:2355px;height:1156px;background:#fff;padding-top:24px;box-shadow:2px 2px 4px rgba(90,100,120,.22)}
.two{display:grid;grid-template-columns:323px 323px;column-gap:54px;margin-top:22px}
.radios{display:flex;align-items:center;height:30px;margin-top:22px}
.s{height:25px}
</style>
<form-section title="GRANT INFORMATION">
<div class="s"></div>
<req-label>Grant #</req-label><text-box kind="readonly" pl="17">198</text-box>
<req-label style="margin-top:18px">Date Of Grant</req-label><date-box>January 09, 2020</date-box>
<req-label style="margin-top:17px">Exercise Price</req-label><money-box unit="USD">0.27</money-box>
<req-label style="margin-top:18px">Shares</req-label><text-box>5,000</text-box>
<req-label style="margin-top:19px">Option Type</req-label>
<div class="radios"><radio-opt checked>Incentive Stock Option</radio-opt><radio-opt style="margin-left:19px">Nonstatuatory Stock Option</radio-opt></div>
<req-label style="margin-top:27px">Vesting Period</req-label><select-box>6 Years</select-box>
<div class="two"><div><req-label>First Vesting Day</req-label><select-box>January 1</select-box></div><div><req-label>Year Of First Vesting</req-label><select-box>2020</select-box></div></div>
<req-label style="margin-top:22px">Grantor</req-label><select-box focus>Leigh E. Michl</select-box>
</form-section>
<form-section title="GENERATE NOTICE DOCUMENT" mt="46"><gen-row slot="wide">Generate Notice Template 6 of Stock Option 2012 plan</gen-row></form-section>`);

def('main-pane',()=>`<style>
:host{display:flex;flex-direction:column;flex:1;min-width:0;background:#e9edf5}
.low{display:flex;flex:1;min-height:0}
.scroll{flex:1;padding-left:19px}
</style><top-bar></top-bar><tab-bar></tab-bar><expand-row></expand-row>
<div class="low"><div class="scroll"><grant-form></grant-form></div><scroll-rail></scroll-rail></div>`);

def('app-root',()=>`<style>
:host{display:flex;flex-direction:column;width:2880px;height:1718px;overflow:hidden;font-family:"Open Sans","Noto Sans",sans-serif}
.body{display:flex;flex:1;min-height:0}
</style><browser-chrome></browser-chrome><app-header></app-header><div class="body"><side-nav></side-nav><main-pane></main-pane></div>`);
</script>
</body>
</html>
